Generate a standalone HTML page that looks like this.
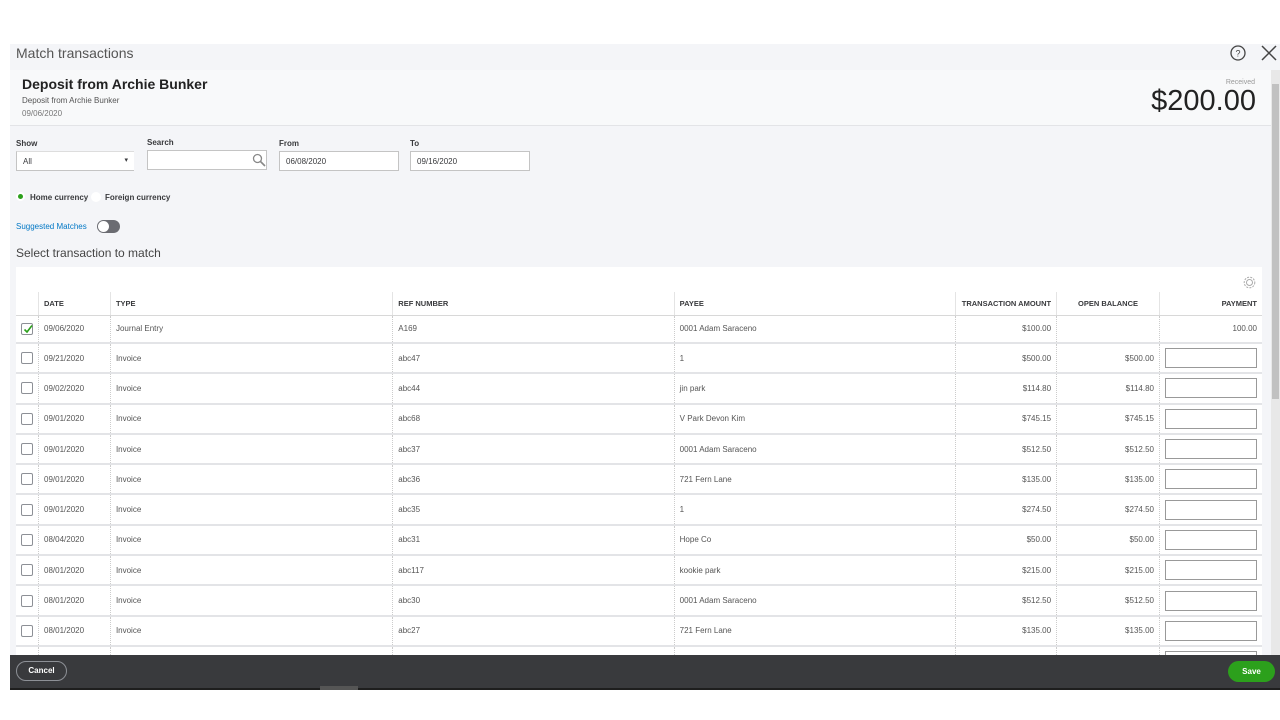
<!DOCTYPE html>
<html><head><style>
*{box-sizing:border-box;margin:0;padding:0}
body{width:1280px;height:720px;background:#fff;font-family:"Liberation Sans",sans-serif;position:relative;overflow:hidden;color:#393a3d}
.abs{position:absolute}
#panel{left:10px;top:44px;width:1270px;height:646px;background:#f4f5f8}
.lbl{font-size:8px;font-weight:bold;color:#393a3d}
.inp{background:#fff;border:1px solid #c4c4c4;height:20px;font-size:8px;padding:5px 6px}
table{border-collapse:collapse;font-size:8px;color:#555}
td,th{height:30.3px;border-bottom:2px solid #e3e4e7;border-left:1px dotted #ccc;padding:0 5px;text-align:left;white-space:nowrap}
th{height:23px;font-size:7.5px;color:#393a3d;font-weight:bold;border-bottom:1px solid #d8d8d8;border-left:1px solid #e4e4e4}
tr.first td{height:28px}
td:first-child,th:first-child{border-left:none}
.r{text-align:right}
.cb{display:inline-block;width:12px;height:12px;border:1px solid #8d9096;border-radius:2px;background:#fff;vertical-align:middle;position:relative}
.pi{display:block;width:92px;height:20px;border:1px solid #999;background:#fff;margin-left:0}
</style></head><body>
<div class="abs" id="panel"></div>
<div class="abs" style="left:16px;top:45px;font-size:14px;color:#555">Match transactions</div>
<svg class="abs" style="left:1229px;top:44px" width="18" height="18"><circle cx="9" cy="9" r="7" fill="none" stroke="#444" stroke-width="1.3"/><text x="9" y="12.5" font-size="9" text-anchor="middle" fill="#444" font-family="Liberation Sans">?</text></svg>
<svg class="abs" style="left:1260px;top:44px" width="18" height="18"><path d="M2 2L16 16M16 2L2 16" stroke="#444" stroke-width="1.5"/></svg>
<div class="abs" style="left:10px;top:70px;width:1261px;height:56px;background:#f8f9fa;border-bottom:1px solid #e3e4e7"></div>
<div class="abs" style="left:22px;top:76px;font-size:14px;font-weight:bold;color:#222">Deposit from Archie Bunker</div>
<div class="abs" style="left:22px;top:96px;font-size:8px;color:#555">Deposit from Archie Bunker</div>
<div class="abs" style="left:22px;top:109px;font-size:8px;color:#777">09/06/2020</div>
<div class="abs" style="left:1200px;top:79px;font-size:7px;color:#999;width:55px;text-align:right">Received</div>
<div class="abs" style="left:1120px;top:85px;font-size:29px;color:#222;width:136px;text-align:right">$200.00</div>
<div class="abs" style="left:1271px;top:70px;width:9px;height:585px;background:#e8e8e8"></div>
<div class="abs" style="left:1272px;top:84px;width:7px;height:315px;background:#c1c1c1"></div>

<div class="abs lbl" style="left:16px;top:139px">Show</div>
<div class="abs inp" style="left:16px;top:151px;width:118px;border-right:none;border-top:1px solid #ddd">All<span style="position:absolute;right:6px;top:4px;font-size:7px">▾</span></div>
<div class="abs lbl" style="left:147px;top:138px">Search</div>
<div class="abs inp" style="left:147px;top:150px;width:120px"></div>
<svg class="abs" style="left:252px;top:153px" width="14" height="14"><circle cx="5.5" cy="5.5" r="4" fill="none" stroke="#888" stroke-width="1.3"/><path d="M8.5 8.5L13 13" stroke="#888" stroke-width="1.6"/></svg>
<div class="abs lbl" style="left:279px;top:139px">From</div>
<div class="abs inp" style="left:279px;top:151px;width:120px">06/08/2020</div>
<div class="abs lbl" style="left:410px;top:139px">To</div>
<div class="abs inp" style="left:410px;top:151px;width:120px">09/16/2020</div>
<div class="abs" style="left:16px;top:192px;width:9px;height:9px;border-radius:50%;background:#fff"></div>
<div class="abs" style="left:18px;top:194px;width:5px;height:5px;border-radius:50%;background:#2ca01c"></div>
<div class="abs lbl" style="left:30px;top:193px">Home currency</div>
<div class="abs" style="left:91px;top:192px;width:10px;height:10px;border-radius:50%;background:#fff"></div>
<div class="abs lbl" style="left:105px;top:193px">Foreign currency</div>
<div class="abs" style="left:16px;top:222px;font-size:8px;color:#0077c5">Suggested Matches</div>
<div class="abs" style="left:97px;top:220px;width:23px;height:13px;border-radius:7px;background:#6b6c72"></div>
<div class="abs" style="left:98px;top:221px;width:11px;height:11px;border-radius:50%;background:#fff"></div>
<div class="abs" style="left:16px;top:246px;font-size:12px;color:#444">Select transaction to match</div>

<div class="abs" style="left:16px;top:267px;width:1246px;height:388px;background:#fff;overflow:hidden">
<svg class="abs" style="left:1227px;top:9px" width="13" height="13"><circle cx="6.5" cy="6.5" r="3" fill="none" stroke="#aaa"/><circle cx="6.5" cy="6.5" r="5.3" fill="none" stroke="#aaa" stroke-dasharray="2 1.2"/></svg>
<table class="abs" style="left:0;top:25px;width:1246px">
<colgroup><col style="width:21px"><col style="width:72px"><col style="width:283px"><col style="width:282px"><col style="width:282px"><col style="width:101px"><col style="width:103px"><col style="width:102px"></colgroup>
<tr><th></th><th>DATE</th><th>TYPE</th><th>REF NUMBER</th><th>PAYEE</th><th class="r">TRANSACTION AMOUNT</th><th style="text-align:center">OPEN BALANCE</th><th class="r">PAYMENT</th></tr>
<tr class="first"><td><span class="cb"><svg style="position:absolute;left:1px;top:0" width="10" height="10"><path d="M1.5 5.5L4 8L9 1.5" fill="none" stroke="#2ca01c" stroke-width="1.6"/></svg></span></td><td>09/06/2020</td><td>Journal Entry</td><td>A169</td><td>0001 Adam Saraceno</td><td class="r">$100.00</td><td></td><td class="r">100.00</td></tr>
<tr><td><span class="cb"></span></td><td>09/21/2020</td><td>Invoice</td><td>abc47</td><td>1</td><td class="r">$500.00</td><td class="r">$500.00</td><td><span class="pi"></span></td></tr>
<tr><td><span class="cb"></span></td><td>09/02/2020</td><td>Invoice</td><td>abc44</td><td>jin park</td><td class="r">$114.80</td><td class="r">$114.80</td><td><span class="pi"></span></td></tr>
<tr><td><span class="cb"></span></td><td>09/01/2020</td><td>Invoice</td><td>abc68</td><td>V Park Devon Kim</td><td class="r">$745.15</td><td class="r">$745.15</td><td><span class="pi"></span></td></tr>
<tr><td><span class="cb"></span></td><td>09/01/2020</td><td>Invoice</td><td>abc37</td><td>0001 Adam Saraceno</td><td class="r">$512.50</td><td class="r">$512.50</td><td><span class="pi"></span></td></tr>
<tr><td><span class="cb"></span></td><td>09/01/2020</td><td>Invoice</td><td>abc36</td><td>721 Fern Lane</td><td class="r">$135.00</td><td class="r">$135.00</td><td><span class="pi"></span></td></tr>
<tr><td><span class="cb"></span></td><td>09/01/2020</td><td>Invoice</td><td>abc35</td><td>1</td><td class="r">$274.50</td><td class="r">$274.50</td><td><span class="pi"></span></td></tr>
<tr><td><span class="cb"></span></td><td>08/04/2020</td><td>Invoice</td><td>abc31</td><td>Hope Co</td><td class="r">$50.00</td><td class="r">$50.00</td><td><span class="pi"></span></td></tr>
<tr><td><span class="cb"></span></td><td>08/01/2020</td><td>Invoice</td><td>abc117</td><td>kookie park</td><td class="r">$215.00</td><td class="r">$215.00</td><td><span class="pi"></span></td></tr>
<tr><td><span class="cb"></span></td><td>08/01/2020</td><td>Invoice</td><td>abc30</td><td>0001 Adam Saraceno</td><td class="r">$512.50</td><td class="r">$512.50</td><td><span class="pi"></span></td></tr>
<tr><td><span class="cb"></span></td><td>08/01/2020</td><td>Invoice</td><td>abc27</td><td>721 Fern Lane</td><td class="r">$135.00</td><td class="r">$135.00</td><td><span class="pi"></span></td></tr>
<tr><td></td><td></td><td></td><td></td><td></td><td></td><td></td><td><span class="pi"></span></td></tr>
</table>
</div>

<div class="abs" style="left:10px;top:655px;width:1270px;height:33px;background:#393a3d"></div>
<div class="abs" style="left:10px;top:688px;width:1270px;height:2px;background:#1e1e1e"></div>
<div class="abs" style="left:320px;top:686px;width:38px;height:4px;background:#555"></div>
<div class="abs" style="left:16px;top:661px;width:51px;height:20px;border:1px solid #8d9096;border-radius:10px;color:#fff;font-size:8px;font-weight:bold;text-align:center;line-height:18px">Cancel</div>
<div class="abs" style="left:1228px;top:661px;width:47px;height:21px;background:#2ca01c;border-radius:11px;color:#fff;font-size:8px;font-weight:bold;text-align:center;line-height:21px">Save</div>
</body></html>
